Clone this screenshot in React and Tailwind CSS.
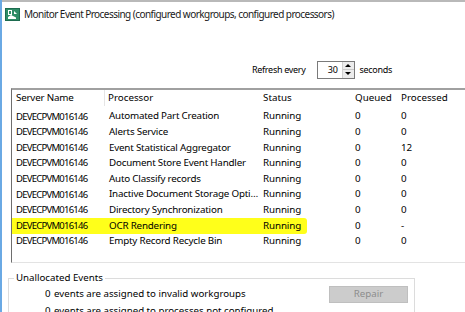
import React from 'react'

const ROWS = [
  ['Automated Part Creation', '0', '0'],
  ['Alerts Service', '0', '0'],
  ['Event Statistical Aggregator', '0', '12'],
  ['Document Store Event Handler', '0', '0'],
  ['Auto Classify records', '0', '0'],
  ['Inactive Document Storage Optimi...', '0', '0'],
  ['Directory Synchronization', '0', '0'],
  ['OCR Rendering', '0', '-', true],
  ['Empty Record Recycle Bin', '0', '0'],
]

function AppIcon() {
  return (
    <svg width="15" height="13" viewBox="0 0 15 13" className="shrink-0">
      <rect x="0" y="0" width="15" height="13" fill="#1d6b4f" />
      <rect x="1" y="1" width="13" height="11" fill="#2e8d66" />
      <path d="M3 2h4v5H3z" fill="#fff" />
      <path d="M4 3h2v3H4z" fill="#2e8d66" />
      <path d="M6 7l5 2.5V11H3V9z" fill="#fff" />
      <path d="M9 3l3 3H9z" fill="#fff" />
    </svg>
  )
}

export default function App() {
  return (
    <div
      className="relative w-[465px] h-[312px] overflow-hidden bg-white text-black border-l-2 border-[#6aa9e4]"
      style={{ fontFamily: '"Noto Sans", "Open Sans", sans-serif' }}
    >
      <div className="h-[2px] bg-[#b9b9b9]" />

      {/* title */}
      <div className="flex items-center gap-[4px] pl-[3px] pt-[5px] h-[19px]">
        <AppIcon />
        <span className="text-[10px] leading-none tracking-[-0.55px] text-[#1a1a1a] whitespace-nowrap">
          Monitor Event Processing (configured workgroups, configured processors)
        </span>
      </div>

      {/* refresh */}
      <div className="flex items-center mt-[39px] pl-[250px] h-[19px] text-[9px] tracking-[-0.3px]">
        <span>Refresh every</span>
        <div className="ml-[11px] flex h-[18px] w-[38px] border border-[#7a7a7a] bg-white">
          <span className="flex-1 text-right pr-[4px] leading-[16px]">30</span>
          <div className="flex flex-col w-[12px] border-l border-[#d0d0d0] bg-[#ececec]">
            <div className="flex-1 flex items-center justify-center border-b border-[#c8c8c8]">
              <div className="w-0 h-0 border-l-[3px] border-r-[3px] border-b-[3px] border-l-transparent border-r-transparent border-b-black" />
            </div>
            <div className="flex-1 flex items-center justify-center">
              <div className="w-0 h-0 border-l-[3px] border-r-[3px] border-t-[3px] border-l-transparent border-r-transparent border-t-black" />
            </div>
          </div>
        </div>
        <span className="ml-[5px]">seconds</span>
      </div>

      {/* list */}
      <div className="ml-[9px] mt-[9px] h-[175px] border-t-2 border-l border-b border-t-[#a0a0a0] border-l-[#6e6e6e] border-b-[#e3e3e3] text-[9.8px]">
        <div className="flex h-[16px] items-center">
          <div className="w-[93px] pl-[4px] h-full flex items-center border-r border-[#e5e5e5] tracking-[-0.2px]">Server Name</div>
          <div className="w-[158px] pl-[3px]">Processor</div>
          <div className="w-[92px]">Status</div>
          <div className="w-[46px]">Queued</div>
          <div className="flex-1">Processed</div>
        </div>
        <div className="pt-[3px]">
          {ROWS.map(([proc, q, p, hl], i) => (
            <div key={i} className="flex h-[15.6px] items-center">
              <div className={`flex items-center h-full ${hl ? 'bg-[#ffff1a] rounded-r-[3px]' : ''}`}>
                <div className="w-[93px] pl-[4px] whitespace-nowrap text-[9.5px] tracking-[-0.75px]">DEVECPVM016146</div>
                <div className="w-[158px] pl-[4px] truncate tracking-[-0.2px]">{proc}</div>
                <div className="w-[44px] tracking-[-0.1px]">Running</div>
              </div>
              <div className="w-[48px]" />
              <div className="w-[46px]">{q}</div>
              <div className="flex-1">{p}</div>
            </div>
          ))}
        </div>
      </div>

      {/* group */}
      <div className="relative ml-[6px] mt-[15px] w-[407px] h-[60px] border border-[#dcdcdc] text-[9.7px]">
        <span className="absolute -top-[7px] left-[5px] bg-white px-[2px] leading-[12px]">Unallocated Events</span>
        <div className="flex items-center pt-[7px] pl-[36px] h-[23px]">
          <span className="w-[9px]">0</span>
          <span>events are assigned to invalid workgroups</span>
          <div className="ml-auto mr-[6px] w-[79px] h-[17px] flex items-center justify-center bg-[#cccccc] border border-[#bfbfbf] text-[#8d8d8d]">
            Repair
          </div>
        </div>
        <div className="flex items-center pl-[36px] mt-[1px] h-[16px]">
          <span className="w-[9px]">0</span>
          <span>events are assigned to processes not configured</span>
        </div>
      </div>
    </div>
  )
}
